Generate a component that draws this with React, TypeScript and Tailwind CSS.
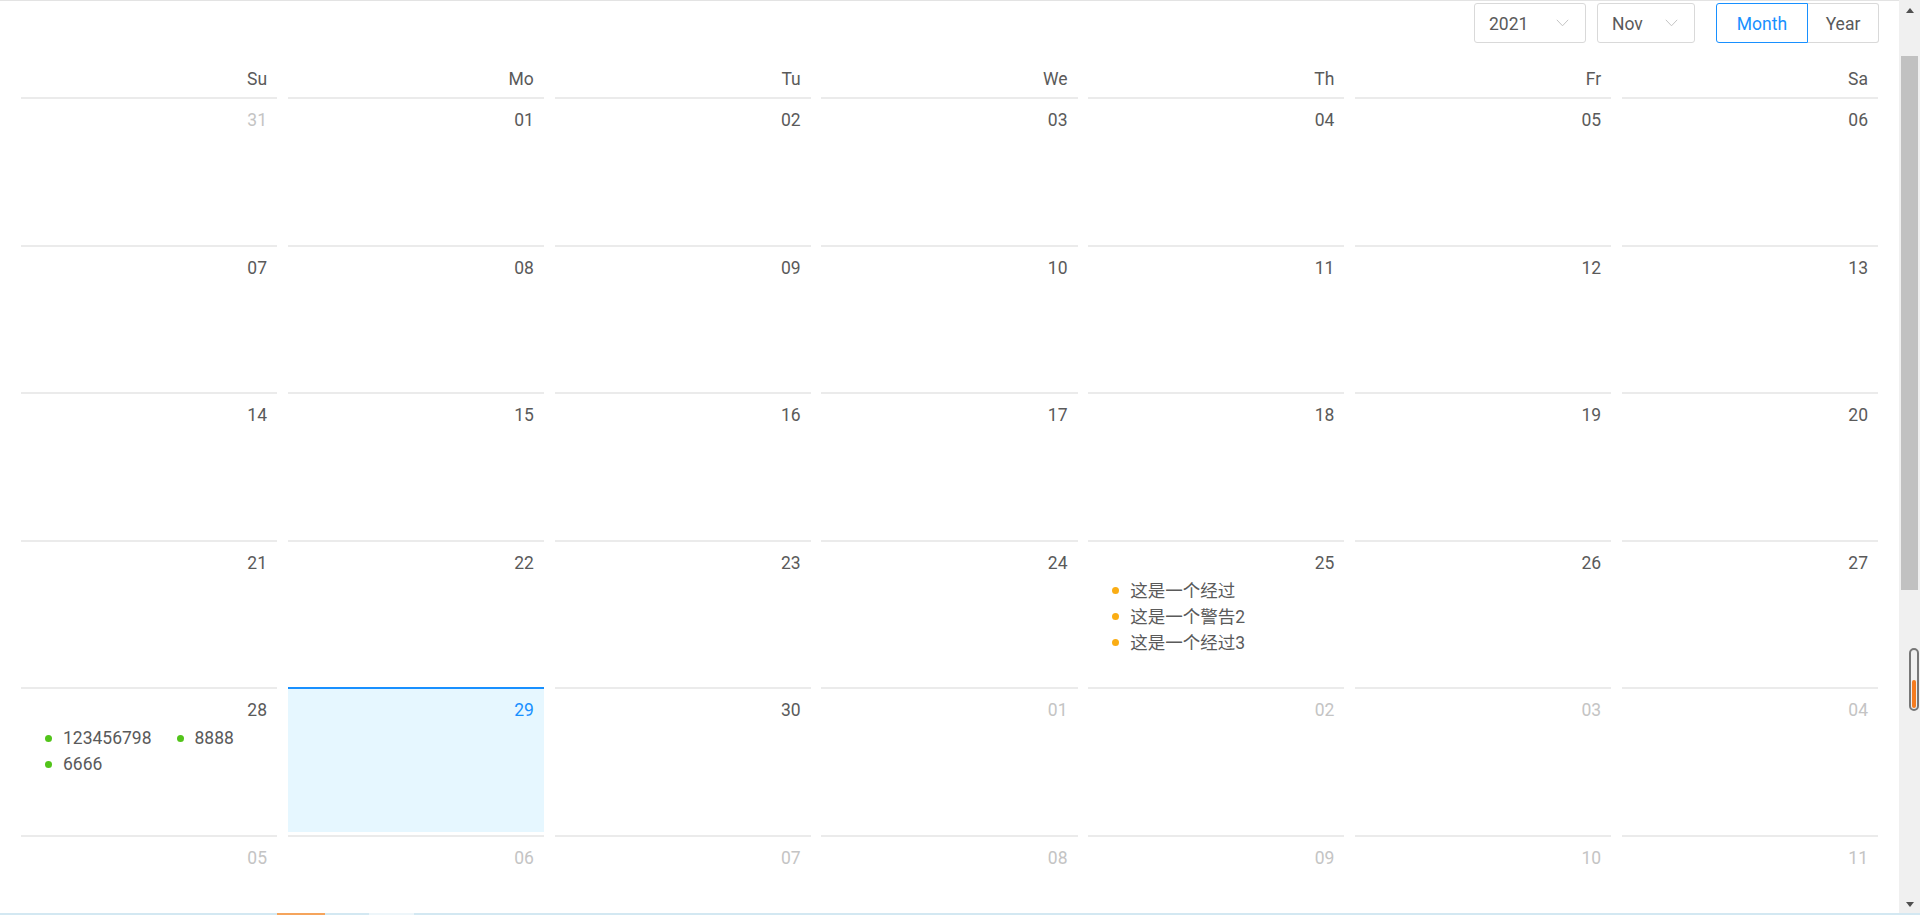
import { Fragment } from 'react';

type CalendarEvent = { color: string; text: string };
type Day = { label: string; muted: boolean; today: boolean; events: CalendarEvent[] };

const WEEKDAYS = ['Su', 'Mo', 'Tu', 'We', 'Th', 'Fr', 'Sa'];

const EVENTS: Record<string, CalendarEvent[]> = {
  '25': [
    { color: 'bg-[#faad14]', text: '这是一个经过' },
    { color: 'bg-[#faad14]', text: '这是一个警告2' },
    { color: 'bg-[#faad14]', text: '这是一个经过3' },
  ],
  '28': [
    { color: 'bg-[#52c41a]', text: '123456798' },
    { color: 'bg-[#52c41a]', text: '8888' },
    { color: 'bg-[#52c41a]', text: '6666' },
  ],
};

// Nov 2021 grid: starts on Sun Oct 31, six weeks
function buildDays(): Day[] {
  const days: Day[] = [{ label: '31', muted: true, today: false, events: [] }];
  for (let d = 1; d <= 30; d++) {
    const label = String(d).padStart(2, '0');
    days.push({ label, muted: false, today: d === 29, events: EVENTS[label] || [] });
  }
  for (let d = 1; days.length < 42; d++) {
    days.push({ label: String(d).padStart(2, '0'), muted: true, today: false, events: [] });
  }
  return days;
}

function Chevron() {
  return (
    <svg width="13" height="8" viewBox="0 0 13 8" fill="none">
      <polyline points="0.8,0.8 6.5,6.8 12.2,0.8" stroke="#c4c4c4" strokeWidth="1" />
    </svg>
  );
}

function Select({ value, width }: { value: string; width: string }) {
  return (
    <div className={`flex h-[40px] ${width} items-center justify-between rounded-[3px] border border-[#d9d9d9] bg-white pl-[14px] pr-[16px]`}>
      <span className="pt-[2px]">{value}</span>
      <Chevron />
    </div>
  );
}

function DayCell({ day }: { day: Day }) {
  return (
    <div className="px-[5.4px]">
      <div
        className={`h-[145px] border-t-2 px-[10px] pt-[8px] ${
          day.today ? 'border-[#1890ff] bg-[#e6f7ff]' : 'border-[#ebebeb] bg-white'
        }`}
      >
        <div
          className={`text-right leading-[27.5px] ${
            day.today ? 'text-[#1890ff]' : day.muted ? 'text-[#c4c4c4]' : 'text-[#5a5a5a]'
          }`}
        >
          {day.label}
        </div>
        {day.events.length > 0 && (
          <ul className="mt-[0.5px] flex flex-wrap gap-x-[25px] pl-[14px]">
            {day.events.map((ev) => (
              <li key={ev.text} className="flex items-center leading-[26px] text-[#5a5a5a]">
                <span className={`h-[7px] w-[7px] rounded-full ${ev.color}`} />
                <span className="ml-[11px]">{ev.text}</span>
              </li>
            ))}
          </ul>
        )}
      </div>
    </div>
  );
}

function Scrollbar() {
  return (
    <div className="relative flex h-full w-[21px] shrink-0 flex-col bg-[#f0f0f0]">
      <div className="flex h-[21px] items-center justify-center">
        <div className="h-0 w-0 border-x-[4px] border-b-[5px] border-x-transparent border-b-[#505050]" />
      </div>
      <div className="mx-auto mt-[35px] h-[534px] w-[17px] bg-[#c1c1c1]" />
      <div className="flex-1" />
      <div className="flex h-[21px] items-center justify-center">
        <div className="h-0 w-0 border-x-[4px] border-t-[5px] border-x-transparent border-t-[#505050]" />
      </div>
      {/* floating widget over the scrollbar */}
      <div className="absolute left-[10px] top-[648px] flex h-[63px] w-[10px] flex-col justify-end rounded-full border-2 border-[#777777] bg-[#f0f0f0] px-[1px] pb-[1px]">
        <div className="h-[28px] w-full rounded-full bg-[#f57c20]" />
      </div>
    </div>
  );
}

export default function App() {
  const days = buildDays();

  return (
    <div className="relative flex h-[915px] w-full overflow-hidden bg-white font-['Roboto','Noto_Sans_CJK_SC',sans-serif] text-[17.5px] text-[#5a5a5a]">
      <div className="flex-1 border-t border-[#e3e3e3]">
        <div className="flex justify-end pr-[20px] pt-[2px]">
          <Select value="2021" width="w-[112px]" />
          <div className="ml-[11px]">
            <Select value="Nov" width="w-[98px]" />
          </div>
          <div className="ml-[21px] flex h-[40px]">
            <div className="flex w-[92px] items-center justify-center rounded-l-[3px] border border-[#1890ff] pt-[2px] text-[#1890ff]">
              Month
            </div>
            <div className="flex w-[71px] items-center justify-center rounded-r-[3px] border border-l-0 border-[#d9d9d9] pt-[2px]">
              Year
            </div>
          </div>
        </div>

        <div className="px-[15.6px]">
          <div className="mt-[23px] grid grid-cols-7 pb-[3.5px]">
            {WEEKDAYS.map((w) => (
              <div key={w} className="pr-[15.4px] text-right leading-[27.5px]">
                {w}
              </div>
            ))}
          </div>
          <div className="grid grid-cols-7 gap-y-[2.5px]">
            {days.map((day, i) => (
              <Fragment key={i}>
                <DayCell day={day} />
              </Fragment>
            ))}
          </div>
        </div>
      </div>

      <Scrollbar />

      <div className="absolute bottom-0 left-0 right-0 h-[2px] bg-[#d3e8f2]">
        <div className="absolute left-[277px] top-0 h-full w-[48px] bg-[#f5a45c]" />
        <div className="absolute left-[369px] top-0 h-full w-[45px] bg-[#eef6fa]" />
      </div>
    </div>
  );
}
